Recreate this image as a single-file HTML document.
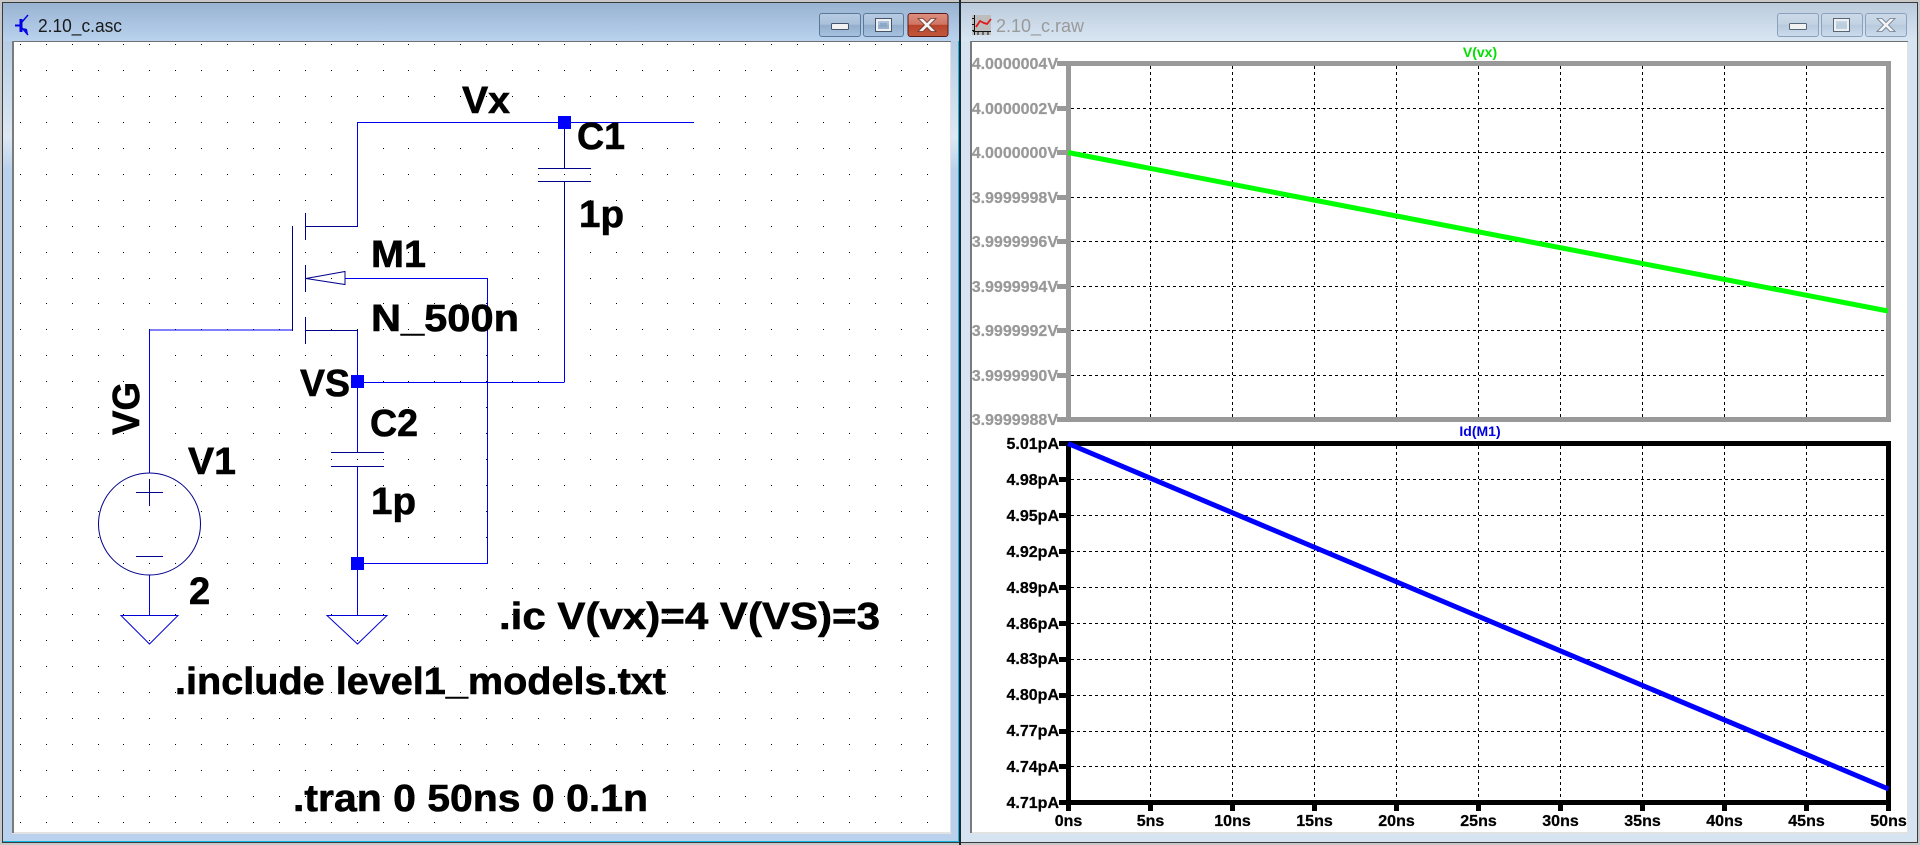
<!DOCTYPE html>
<html><head><meta charset="utf-8"><title>2.10_c</title>
<style>
html,body{margin:0;padding:0;width:1920px;height:845px;overflow:hidden;background:#c8c8c8}
svg{display:block;position:absolute;left:0;top:0}
text{font-family:"Liberation Sans",sans-serif}
.s{font-weight:bold;font-size:38px;fill:#000;stroke:#000;stroke-width:.6px}
</style></head><body>
<svg width="1920" height="845" viewBox="0 0 1920 845" xmlns="http://www.w3.org/2000/svg">
<defs>
<linearGradient id="t1" x1="0" y1="0" x2="0" y2="1"><stop offset="0" stop-color="#98b3d1"/><stop offset="1" stop-color="#b9d2ee"/></linearGradient>
<linearGradient id="t2" x1="0" y1="0" x2="0" y2="1"><stop offset="0" stop-color="#bccbdb"/><stop offset="1" stop-color="#d8e6f4"/></linearGradient>
<linearGradient id="s1" x1="0" y1="0" x2="0" y2="1"><stop offset="0" stop-color="#a9c3df"/><stop offset=".16" stop-color="#dce8f3"/><stop offset=".2" stop-color="#b9d1ec"/><stop offset="1" stop-color="#b9d1ec"/></linearGradient>
<linearGradient id="b1" x1="0" y1="0" x2="0" y2="1"><stop offset="0" stop-color="#b8cce3"/><stop offset=".48" stop-color="#a9c0da"/><stop offset=".5" stop-color="#93aecb"/><stop offset="1" stop-color="#a6c2e0"/></linearGradient>
<linearGradient id="b2" x1="0" y1="0" x2="0" y2="1"><stop offset="0" stop-color="#ccdae8"/><stop offset=".48" stop-color="#c3d2e2"/><stop offset=".5" stop-color="#b7c9dc"/><stop offset="1" stop-color="#cbdcee"/></linearGradient>
<linearGradient id="b3" x1="0" y1="0" x2="0" y2="1"><stop offset="0" stop-color="#dd8f80"/><stop offset=".48" stop-color="#cf7564"/><stop offset=".5" stop-color="#b8422a"/><stop offset="1" stop-color="#c25a3c"/></linearGradient>
</defs>

<!-- outer edges -->
<rect x="2" y="2" width="1916" height="841" fill="#3a3a3a"/>
<rect x="959" y="0" width="2" height="845" fill="#1a2630"/>

<!-- left window -->
<rect x="3" y="3" width="956" height="839" fill="url(#s1)"/>
<rect x="3" y="3" width="956" height="38" fill="url(#t1)"/>
<rect x="3" y="841" width="956" height="1" fill="#16b6dc"/>
<rect x="958" y="41" width="1" height="801" fill="#16b6dc"/>
<rect x="12" y="41" width="939" height="793" fill="#e2e2e2"/>
<rect x="12" y="41" width="939" height="1" fill="#6f6f6f"/>
<rect x="12" y="41" width="2" height="792" fill="#7b7b7b"/>
<rect x="14" y="42" width="936" height="790" fill="#fff"/>
<!-- icon -->
<g stroke="#0000e6" fill="none">
<path d="M15 25.500h6" stroke-width="2"/>
<path d="M21 19v13" stroke-width="3"/>
<path d="M22 22l6-7M22 28l6 7" stroke-width="1.400"/>
</g>
<path d="M23 28l5 6-1-5z" fill="#0000e6"/>
<text x="38" y="32" font-size="18" fill="#1a1a1a" textLength="84" lengthAdjust="spacingAndGlyphs">2.10_c.asc</text>

<!-- left buttons -->
<rect x="819.500" y="13.500" width="41" height="23" rx="2.500" fill="url(#b1)" stroke="#5c7898"/>
<rect x="863.500" y="13.500" width="40" height="23" rx="2.500" fill="url(#b1)" stroke="#5c7898"/>
<rect x="908" y="13.500" width="40" height="23" rx="2.500" fill="url(#b3)" stroke="#5a1a1a"/>
<rect x="831.500" y="23.500" width="17" height="6" rx="1" fill="#f2f2f2" stroke="#44546a"/>
<rect x="875.500" y="18.500" width="16" height="13" fill="none" stroke="#44546a"/>
<rect x="877" y="20" width="13" height="10" fill="none" stroke="#f0f0f0" stroke-width="2"/>
<rect x="880" y="23" width="7" height="4" fill="#8da8c6"/>
<path d="M918 18.500h5l4 4 4-4h5l-6.500 6.500 6.500 6.500h-5l-4-4-4 4h-5l6.500-6.500z" fill="#f3f3f3" stroke="#70342a" stroke-width=".8"/>

<!-- grid dots -->
<path id="dots" d="" fill="#000" shape-rendering="crispEdges"/>

<!-- schematic: wires -->
<g shape-rendering="crispEdges" fill="none" stroke-width="1">
<g stroke="#0000f0">
<path d="M358 122.500H694M357.500 122V226M357.500 330V382M149.500 330H292.500M149.500 330V473M357.500 382.500H564.500M564.500 382V250M564.500 129V122M345 278.500H487.500V563.500H357.500M357.500 382V452M357.500 466V615M149.500 575V615"/>
</g>
<g stroke="#00008c">
<path d="M305 226.500H358M305.500 213V240M305.500 265V292M305.500 317V344M292.500 226V331M305 330.500H358M564.500 129V168M564.500 181V250M538 168.500H591M538 181.500H591M331 452.500H384M331 466.500H384M136 492.500H163M149.500 479V506M136 556.500H163"/>
</g>
</g>
<g fill="none" stroke="#00008c" stroke-width="1">
<path d="M306 278.500L345 271.500V284.500Z"/>
<circle cx="149.500" cy="524" r="51"/>
</g>
<g fill="none" stroke="#0000d8" stroke-width="1">
<path d="M121 615.500H178L149.500 644Z"/>
<path d="M327 615.500H387L357.500 644Z"/>
</g>
<g fill="#0000ff" shape-rendering="crispEdges">
<rect x="558" y="116" width="13" height="13"/>
<rect x="351" y="375" width="13" height="13"/>
<rect x="351" y="557" width="13" height="13"/>
</g>

<!-- schematic: text -->
<text class="s" x="462" y="113" textLength="48" lengthAdjust="spacingAndGlyphs">Vx</text>
<text class="s" x="577" y="149" textLength="48" lengthAdjust="spacingAndGlyphs">C1</text>
<text class="s" x="579" y="227" textLength="45" lengthAdjust="spacingAndGlyphs">1p</text>
<text class="s" x="371" y="267" textLength="55" lengthAdjust="spacingAndGlyphs">M1</text>
<text class="s" x="371" y="331" textLength="148" lengthAdjust="spacingAndGlyphs">N_500n</text>
<text class="s" x="300" y="396" textLength="50" lengthAdjust="spacingAndGlyphs">VS</text>
<text class="s" x="370" y="436" textLength="48" lengthAdjust="spacingAndGlyphs">C2</text>
<text class="s" x="371" y="514" textLength="45" lengthAdjust="spacingAndGlyphs">1p</text>
<text class="s" x="188" y="474" textLength="48" lengthAdjust="spacingAndGlyphs">V1</text>
<text class="s" x="189" y="604">2</text>
<text class="s" transform="translate(139 435) rotate(-90)" textLength="53" lengthAdjust="spacingAndGlyphs">VG</text>
<text class="s" x="499" y="629" textLength="381" lengthAdjust="spacingAndGlyphs">.ic V(vx)=4 V(VS)=3</text>
<text class="s" x="175" y="694" textLength="491" lengthAdjust="spacingAndGlyphs">.include level1_models.txt</text>
<text class="s" x="293" y="811" textLength="355" lengthAdjust="spacingAndGlyphs">.tran 0 50ns 0 0.1n</text>

<!-- right window -->
<rect x="961" y="3" width="956" height="839" fill="#d6e3f1"/>
<rect x="961" y="3" width="956" height="38" fill="url(#t2)"/>
<rect x="970" y="41" width="938" height="793" fill="#e2e2e2"/>
<rect x="970" y="41" width="938" height="1" fill="#6f6f6f"/>
<rect x="970" y="41" width="2" height="792" fill="#7b7b7b"/>
<rect x="972" y="42" width="935" height="790" fill="#fff"/>
<!-- icon -->
<rect x="972" y="15" width="19" height="20" fill="#bdbdbd"/>
<path d="M973 31.500H991M974.500 15V35M972 18.500h3M972 24.500h3M972 30.500h3M978 32v3M983 32v3M988 32v3" stroke="#111" fill="none"/>
<path d="M976 27l4-6 4 2 3 1 4-5" stroke="#e01818" stroke-width="1.800" fill="none"/>
<text x="996" y="32" font-size="18" fill="#9a9a9a" textLength="88" lengthAdjust="spacingAndGlyphs">2.10_c.raw</text>

<!-- right buttons -->
<rect x="1777.500" y="13.500" width="41" height="23" rx="2.500" fill="url(#b2)" stroke="#8ba1bc"/>
<rect x="1821.500" y="13.500" width="41" height="23" rx="2.500" fill="url(#b2)" stroke="#8ba1bc"/>
<rect x="1865.500" y="13.500" width="41" height="23" rx="2.500" fill="url(#b2)" stroke="#8ba1bc"/>
<rect x="1789.500" y="23.500" width="17" height="6" rx="1" fill="#f2f2f2" stroke="#55657a"/>
<rect x="1833.500" y="18.500" width="16" height="13" fill="none" stroke="#55657a"/>
<rect x="1835" y="20" width="13" height="10" fill="none" stroke="#f0f0f0" stroke-width="2"/>
<rect x="1838" y="23" width="7" height="4" fill="#bccde0"/>
<path d="M1877 18.500h5l4 4 4-4h5l-6.500 6.500 6.500 6.500h-5l-4-4-4 4h-5l6.500-6.500z" fill="#f3f3f3" stroke="#67788f" stroke-width=".8"/>

<!-- plot 1 grid -->
<g stroke="#000" stroke-width="1" stroke-dasharray="3 3" shape-rendering="crispEdges" fill="none">
<path d="M1071 108.500H1886M1071 152.500H1886M1071 197.500H1886M1071 241.500H1886M1071 286.500H1886M1071 330.500H1886M1071 375.500H1886"/>
<path d="M1150.500 66V417M1232.500 66V417M1314.500 66V417M1396.500 66V417M1478.500 66V417M1560.500 66V417M1642.500 66V417M1724.500 66V417M1806.500 66V417"/>
</g>
<!-- plot 1 frame -->
<g fill="#999" shape-rendering="crispEdges">
<rect x="1057" y="61" width="834" height="5"/>
<rect x="1057" y="417" width="834" height="5"/>
<rect x="1066" y="61" width="5" height="361"/>
<rect x="1886" y="61" width="5" height="361"/>
<rect x="1057" y="106" width="9" height="5"/>
<rect x="1057" y="150" width="9" height="5"/>
<rect x="1057" y="195" width="9" height="5"/>
<rect x="1057" y="239" width="9" height="5"/>
<rect x="1057" y="284" width="9" height="5"/>
<rect x="1057" y="328" width="9" height="5"/>
<rect x="1057" y="373" width="9" height="5"/>
</g>
<g fill="#999" stroke="#999" stroke-width=".25" font-weight="bold" font-size="16" text-anchor="end">
<text x="1058" y="69">4.0000004V</text>
<text x="1058" y="114">4.0000002V</text>
<text x="1058" y="158">4.0000000V</text>
<text x="1058" y="203">3.9999998V</text>
<text x="1058" y="247">3.9999996V</text>
<text x="1058" y="292">3.9999994V</text>
<text x="1058" y="336">3.9999992V</text>
<text x="1058" y="381">3.9999990V</text>
<text x="1058" y="425">3.9999988V</text>
</g>
<text x="1480" y="57" text-anchor="middle" font-size="14" font-weight="bold" fill="#00e000">V(vx)</text>
<path d="M1068 152.500L1888 311" stroke="#00ff00" stroke-width="5" fill="none"/>

<!-- plot 2 grid -->
<g stroke="#000" stroke-width="1" stroke-dasharray="3 3" shape-rendering="crispEdges" fill="none">
<path d="M1071 479.500H1886M1071 515.500H1886M1071 551.500H1886M1071 587.500H1886M1071 623.500H1886M1071 659.500H1886M1071 695.500H1886M1071 731.500H1886M1071 766.500H1886"/>
<path d="M1150.500 446V800M1232.500 446V800M1314.500 446V800M1396.500 446V800M1478.500 446V800M1560.500 446V800M1642.500 446V800M1724.500 446V800M1806.500 446V800"/>
</g>
<!-- plot 2 frame -->
<g fill="#000" shape-rendering="crispEdges">
<rect x="1059" y="441" width="832" height="5"/>
<rect x="1059" y="800" width="832" height="5"/>
<rect x="1066" y="441" width="5" height="370"/>
<rect x="1886" y="441" width="5" height="370"/>
<rect x="1059" y="477" width="7" height="5"/>
<rect x="1059" y="513" width="7" height="5"/>
<rect x="1059" y="549" width="7" height="5"/>
<rect x="1059" y="585" width="7" height="5"/>
<rect x="1059" y="621" width="7" height="5"/>
<rect x="1059" y="657" width="7" height="5"/>
<rect x="1059" y="693" width="7" height="5"/>
<rect x="1059" y="729" width="7" height="5"/>
<rect x="1059" y="764" width="7" height="5"/>
<rect x="1148" y="805" width="5" height="6"/>
<rect x="1230" y="805" width="5" height="6"/>
<rect x="1312" y="805" width="5" height="6"/>
<rect x="1394" y="805" width="5" height="6"/>
<rect x="1476" y="805" width="5" height="6"/>
<rect x="1558" y="805" width="5" height="6"/>
<rect x="1640" y="805" width="5" height="6"/>
<rect x="1722" y="805" width="5" height="6"/>
<rect x="1804" y="805" width="5" height="6"/>
</g>
<g fill="#000" stroke="#000" stroke-width=".25" font-weight="bold" font-size="16" text-anchor="end">
<text x="1059" y="449">5.01pA</text>
<text x="1059" y="485">4.98pA</text>
<text x="1059" y="521">4.95pA</text>
<text x="1059" y="557">4.92pA</text>
<text x="1059" y="593">4.89pA</text>
<text x="1059" y="629">4.86pA</text>
<text x="1059" y="664">4.83pA</text>
<text x="1059" y="700">4.80pA</text>
<text x="1059" y="736">4.77pA</text>
<text x="1059" y="772">4.74pA</text>
<text x="1059" y="808">4.71pA</text>
</g>
<g fill="#000" stroke="#000" stroke-width=".25" font-weight="bold" font-size="16" text-anchor="middle">
<text x="1068.500" y="826">0ns</text>
<text x="1150.500" y="826">5ns</text>
<text x="1232.500" y="826">10ns</text>
<text x="1314.500" y="826">15ns</text>
<text x="1396.500" y="826">20ns</text>
<text x="1478.500" y="826">25ns</text>
<text x="1560.500" y="826">30ns</text>
<text x="1642.500" y="826">35ns</text>
<text x="1724.500" y="826">40ns</text>
<text x="1806.500" y="826">45ns</text>
<text x="1888.500" y="826">50ns</text>
</g>
<text x="1480" y="436" text-anchor="middle" font-size="14" font-weight="bold" fill="#0000e0">Id(M1)</text>
<path d="M1068 443.500L1888.500 789" stroke="#0000ff" stroke-width="5" fill="none"/>
</svg>
<script>
var d="";
for(var j=0;j<=30;j++){var y=Math.floor(44.9+25.905*j);
for(var i=0;i<=35;i++){var x=Math.floor(20.33+25.905*i);d+="M"+x+" "+y+"h1v1h-1z";}}
document.getElementById("dots").setAttribute("d",d);
</script>
</body></html>
